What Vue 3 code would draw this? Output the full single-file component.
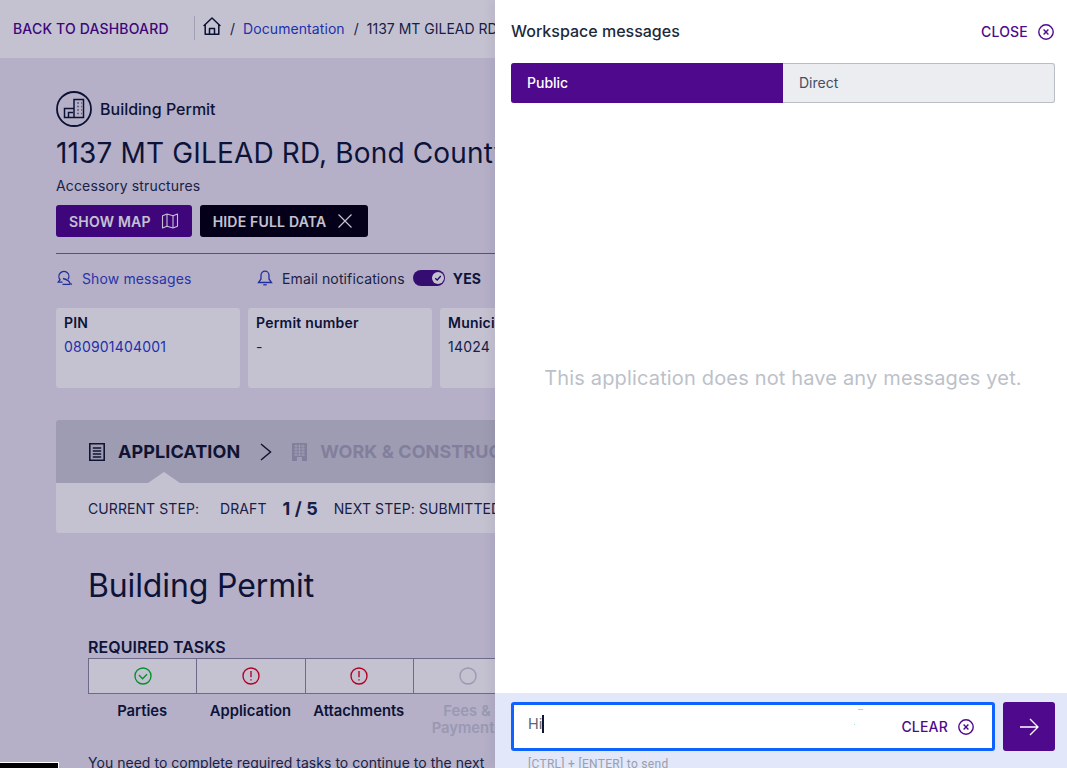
<script setup>
const cards = [
  { label: 'PIN', value: '080901404001', link: true },
  { label: 'Permit number', value: '-', link: false },
  { label: 'Municipality', value: '14024', link: false },
]
const tasks = [
  { name: 'Parties', state: 'ok' },
  { name: 'Application', state: 'err' },
  { name: 'Attachments', state: 'err' },
  { name: 'Fees & Payments', state: 'off' },
]
</script>

<template>
  <div class="page">
    <header class="topbar">
      <span class="back">BACK TO DASHBOARD</span>
      <span class="vsep"></span>
      <svg class="home" viewBox="0 0 18 18" fill="none" stroke="#0c1733" stroke-width="1.5" stroke-linejoin="round">
        <path d="M.6 9 9 1l8.400 8" />
        <path d="M2.200 7.500v9.700h13.600V7.500" />
        <path d="M6.500 17.200v-5.700h5v5.700" />
      </svg>
      <span class="slash">/</span>
      <span class="crumb-link">Documentation</span>
      <span class="slash">/</span>
      <span class="crumb">1137 MT GILEAD RD</span>
    </header>

    <main class="main">
      <div class="kind">
        <svg class="kind-icon" viewBox="0 0 36 36" fill="none" stroke="#0c1733" stroke-width="1.500">
          <circle cx="18" cy="18" r="17" stroke-width="1.800" />
          <path d="M18 17.500V8.500h9.500v18H8.500v-9H18v9" />
          <path d="M12.500 26.500v-5H17" />
          <path d="M21.500 12h1M25 12h.5M21.500 15.500h1M25 15.500h.5M21.500 19h1M25 19h.5M21.500 22.500h1M25 22.500h.5" stroke-width="1.300" />
        </svg>
        <span class="kind-label">Building Permit</span>
      </div>
      <h1 class="address">1137 MT GILEAD RD, Bond County</h1>
      <div class="sub">Accessory structures</div>
      <div class="actions">
        <button class="btn btn-purple">
          SHOW MAP
          <svg class="btn-icon" viewBox="0 0 18 18" fill="none" stroke="currentColor" stroke-width="1.100" stroke-linejoin="round">
            <path d="M1.500 3.800 6 2l6 1.800L16.500 2v12.200L12 16l-6-1.800-4.500 1.800z" />
            <path d="M6 2v12.200M12 3.800V16" />
          </svg>
        </button>
        <button class="btn btn-dark">
          HIDE FULL DATA
          <svg class="btn-icon" viewBox="0 0 18 18" fill="none" stroke="currentColor" stroke-width="1.200">
            <path d="M2.500 2.500l13 13M15.500 2.500l-13 13" />
          </svg>
        </button>
      </div>
      <hr class="rule" />
      <div class="meta">
        <span class="msg-link">
          <svg class="meta-icon" viewBox="0 0 16 16" fill="none" stroke="#2a3fb8" stroke-width="1.300">
            <path d="M3.200 9.800A5 5 0 1 1 11 9.300" />
            <path d="M3.200 9.500 1.200 12.200h4.300" />
            <path d="M6 8.500c2 .4 4 1.200 5.500 2.500.9.800 1.300 1.700 1.500 2.600.5.500 1.200.600 2 .4" />
            <path d="M5.500 14.400h7.500" />
          </svg>
          Show messages
        </span>
        <span class="notif">
          <svg class="meta-icon bell" viewBox="0 0 16 16" fill="none" stroke="#2a3fb8" stroke-width="1.300">
            <path d="M8 1.200a4 4 0 0 0-4 4v3.800L1.500 12.500h13L12 9V5.200a4 4 0 0 0-4-4z" />
            <path d="M6.300 14.800h3.400" />
          </svg>
          Email notifications
        </span>
        <span class="toggle">
          <span class="knob">
            <svg viewBox="0 0 12 12" fill="none" stroke="#34106c" stroke-width="1.400"><path d="M3.200 6.200 5.200 8l3.600-4" /></svg>
          </span>
        </span>
        <span class="yes">YES</span>
      </div>

      <div class="cards">
        <div v-for="c in cards" :key="c.label" class="card">
          <div class="card-label">{{ c.label }}</div>
          <div class="card-value" :class="{ link: c.link }">{{ c.value }}</div>
        </div>
      </div>

      <section class="steps">
        <div class="steps-head">
          <svg class="step-icon" viewBox="0 0 16 18" fill="none" stroke="#141a2e" stroke-width="1.600">
            <path d="M.8.800h14.400v16.400H.8z" />
            <path d="M3.800 5h8.400M3.800 8h8.400M3.800 11h8.400M3.800 14h8.400" stroke-width="1.300" />
          </svg>
          <span class="step-active">APPLICATION</span>
          <svg class="chev" viewBox="0 0 12 18" fill="none" stroke="#141a2e" stroke-width="1.500"><path d="M1 1l9.500 8L1 17" /></svg>
          <svg class="dim" viewBox="0 0 15 18">
            <path d="M0 0h15v18H0z" fill="#a8a7b8" />
            <path d="M2 3h11M2 6h11M2 9h11M2 12h11M4 1.500v11.500M7.500 1.500v11.500M11 1.500v11.500" stroke="#cecdd8" stroke-width=".9" fill="none" />
            <path d="M5 14h5v4H5z" fill="#cecdd8" />
          </svg>
          <span class="step-dim">WORK &amp; CONSTRUCTION</span>
          <span class="notch"></span>
        </div>
        <div class="steps-foot">
          <span>CURRENT STEP:</span>
          <span class="draft">DRAFT</span>
          <span class="count">1 / 5</span>
          <span>NEXT STEP: SUBMITTED</span>
        </div>
      </section>

      <div class="content">
        <h2 class="title">Building Permit</h2>
        <div class="req">REQUIRED TASKS</div>
        <div class="task-row">
          <div v-for="t in tasks" :key="t.name" class="task-cell">
            <svg v-if="t.state === 'ok'" viewBox="0 0 20 20" fill="none" stroke="#00c026" stroke-width="1.500">
              <circle cx="10" cy="10" r="8.900" /><path d="M5.500 9 9.500 13l5-5" />
            </svg>
            <svg v-else-if="t.state === 'err'" viewBox="0 0 20 20" fill="none" stroke="#e8001c" stroke-width="1.500">
              <circle cx="10" cy="10" r="8.900" /><path d="M10 4.500v7M10 13.500v1.500" />
            </svg>
            <svg v-else viewBox="0 0 20 20" fill="none" stroke="#c8c8d7" stroke-width="1.500">
              <circle cx="10" cy="10" r="8.900" />
            </svg>
          </div>
        </div>
        <div class="task-names">
          <div v-for="t in tasks" :key="t.name" class="task-name" :class="{ off: t.state === 'off' }">{{ t.name }}</div>
        </div>
        <p class="note">You need to complete required tasks to continue to the next step of this application process.</p>
      </div>
    </main>

    <div class="corner"></div>
    <div class="overlay"></div>

    <aside class="panel">
      <div class="panel-head">
        <span class="panel-title">Workspace messages</span>
        <span class="action">
          CLOSE
          <svg class="circle-x" viewBox="0 0 16 16" fill="none" stroke="currentColor" stroke-width="1.400">
            <circle cx="8" cy="8" r="7.200" /><path d="M5.600 5.600l4.800 4.800M10.400 5.600l-4.800 4.800" />
          </svg>
        </span>
      </div>
      <div class="tabs">
        <div class="tab active">Public</div>
        <div class="tab">Direct</div>
      </div>
      <div class="empty">This application does not have any messages yet.</div>
      <div class="composer">
        <div class="composer-row">
          <div class="input">
            <span class="typed">Hi</span><span class="caret"></span>
            <span class="speck speck-a"></span>
            <span class="speck speck-b"></span>
            <span class="action clear">
              CLEAR
              <svg class="circle-x" viewBox="0 0 16 16" fill="none" stroke="currentColor" stroke-width="1.400">
                <circle cx="8" cy="8" r="7.200" /><path d="M5.600 5.600l4.800 4.800M10.400 5.600l-4.800 4.800" />
              </svg>
            </span>
          </div>
          <button class="send">
            <svg viewBox="0 0 20 20" fill="none" stroke="#fff" stroke-width="1.300"><path d="M1 10h18M11 2l8 8-8 8" /></svg>
          </button>
        </div>
        <div class="hint">[CTRL] + [ENTER] to send</div>
      </div>
    </aside>
  </div>
</template>

<style>
html, body { margin: 0; height: 100%; overflow: hidden; }
</style>

<style scoped>
.page {
  position: relative;
  width: 1067px;
  height: 768px;
  overflow: hidden;
  background: #ebe8f3;
  font-family: Inter, "Liberation Sans", sans-serif;
  color: #0f1a36;
}
.topbar {
  height: 58px;
  box-sizing: border-box;
  display: flex;
  align-items: center;
  padding: 0 0 2px 13px;
  background: #fff;
  font-size: 14px;
  white-space: nowrap;
}
.back { font-weight: 500; color: #4f098d; width: 181px; letter-spacing: .17px; }
.vsep { width: 1px; height: 24px; background: #d1d3dc; margin-right: 8px; }
.home { width: 18px; height: 18px; margin: 0 9px 4px 0; }
.slash { color: #1d2a4a; margin: 0 8px 0 0; }
.crumb-link { color: #2a3fd0; margin-right: 9px; letter-spacing: .08px; }
.crumb { color: #1d2a4a; }
.main {
  padding: 33px 0 0 56px;
  width: 900px;
  box-sizing: border-box;
}
.kind { display: flex; align-items: center; gap: 8px; height: 36px; }
.kind-icon { width: 36px; height: 36px; }
.kind-label { font-size: 16px; font-weight: 500; }
.address { margin: 8px 0 0; font-size: 28px; font-weight: 400; line-height: 36px; height: 36px; white-space: nowrap; letter-spacing: .15px; }
.sub { margin-top: 6px; font-size: 14px; line-height: 18px; color: #232c48; letter-spacing: .15px; }
.actions { display: flex; gap: 8px; margin-top: 10px; }
.btn {
  height: 32px; border: 0; border-radius: 3px; padding: 0 13px;
  display: flex; align-items: center; gap: 10px;
  font: 600 14px Inter, "Liberation Sans", sans-serif;
  letter-spacing: .2px;
  color: #fff;
}
.btn-purple { background: #4f098d; }
.btn-dark { background: #05000f; padding-right: 14px; }
.btn-icon { width: 18px; height: 18px; }
.rule { border: 0; border-top: 1px solid #6f6f84; margin: 16px 0 0; }
.meta { display: flex; align-items: center; height: 48px; font-size: 14px; white-space: nowrap; letter-spacing: .12px; }
.meta-icon { width: 16px; height: 16px; }
.msg-link { display: flex; align-items: center; gap: 9px; color: #3346c8; margin-left: 1px; width: 200px; }
.notif { display: flex; align-items: center; gap: 9px; color: #232c48; }
.toggle {
  margin-left: 8px; width: 32px; height: 16px; border-radius: 8px; background: #441281;
  display: flex; align-items: center; justify-content: flex-end; padding-right: 1px; box-sizing: border-box;
}
.knob { width: 12px; height: 12px; border-radius: 50%; background: #fff; display: flex; }
.yes { margin-left: 8px; font-weight: 700; }
.cards { display: flex; gap: 8px; margin-top: 6px; }
.card {
  width: 184px; height: 80px; box-sizing: border-box; padding: 7px 8px;
  background: #fff; border-radius: 3px;
}
.card-label { font-size: 14px; font-weight: 600; line-height: 16px; white-space: nowrap; letter-spacing: .22px; }
.card-value { margin-top: 7px; font-size: 14px; letter-spacing: .2px; color: #1d2a4a; }
.card-value.link { color: #2a3fd0; }
.steps { margin-top: 32px; width: 700px; position: relative; }
.steps-head {
  position: relative;
  height: 63px; background: #cecdd8; border-radius: 3px 3px 0 0;
  display: flex; align-items: center; padding: 0 0 0 33px; box-sizing: border-box;
  white-space: nowrap;
}
.step-icon { width: 16px; height: 18px; margin-right: 13px; }
.step-active { font-size: 18px; font-weight: 700; color: #141a2e; letter-spacing: .08px; }
.chev { width: 12px; height: 18px; margin: 0 20px; }
.step-dim { font-size: 18px; font-weight: 700; color: #a8a7b8; letter-spacing: .08px; }
.dim { width: 15px; height: 18px; margin-right: 13px; }
.notch {
  position: absolute; left: 92px; bottom: 0; width: 0; height: 0;
  border-left: 16px solid transparent; border-right: 16px solid transparent;
  border-bottom: 11px solid #fff;
}
.steps-foot {
  height: 50px; background: #fff; border-radius: 0 0 3px 3px;
  display: flex; align-items: center; padding-left: 32px; box-sizing: border-box;
  font-size: 14px; white-space: nowrap; color: #1d2a4a; letter-spacing: .08px;
}
.draft { margin-left: 21px; }
.count { margin: 0 16px; font-size: 18px; font-weight: 700; }
.content { padding-left: 32px; }
.title { margin: 31px 0 0; font-size: 32px; font-weight: 400; line-height: 44px; letter-spacing: -.13px; }
.req { margin-top: 29px; font-size: 16px; font-weight: 600; line-height: 21px; letter-spacing: .06px; }
.task-row { display: flex; width: 650px; border: 1px solid #8f8da2; box-sizing: border-box; height: 36px; background: #fff; }
.task-cell { width: 108.300px; flex: none; display: flex; align-items: center; justify-content: center; border-right: 1px solid #8f8da2; box-sizing: border-box; }
.task-cell svg { width: 18px; height: 18px; }
.task-names { display: flex; margin-top: 9px; }
.task-name { width: 108.300px; flex: none; text-align: center; font-size: 14.800px; font-weight: 600; line-height: 17px; padding: 0 8px; box-sizing: border-box; }
.task-name.off { color: #c8c8d7; padding: 0 16px; }
.note { margin: 16px 0 0; width: 405px; font-size: 14px; line-height: 20px; color: #232c48; letter-spacing: .03px; }
.corner {
  position: absolute; left: 0; bottom: 0; width: 58px; height: 5px;
  background: #000; border-top: 1px solid #fff; border-right: 1px solid #fff; z-index: 3;
}
.overlay { position: absolute; inset: 0; background: rgba(9, 0, 63, .24); }
.panel {
  position: absolute; top: 0; right: 0; bottom: 0; width: 572px;
  background: #fff; display: flex; flex-direction: column;
  box-shadow: -4px 0 10px rgba(20, 10, 50, .06);
}
.panel-head {
  display: flex; align-items: center; justify-content: space-between;
  padding: 0 13px 0 16px; height: 63px;
}
.panel-title { font-size: 16px; font-weight: 500; color: #1b2a3c; margin-bottom: 1px; }
.action { display: flex; align-items: center; gap: 10px; font-size: 14px; font-weight: 500; color: #4f098d; letter-spacing: .2px; }
.circle-x { width: 16px; height: 16px; }
.tabs {
  display: flex; margin: 0 12px 0 16px; height: 40px; border-radius: 3px;
  overflow: hidden; background: #ebedf0; box-sizing: border-box;
  box-shadow: inset 0 0 0 1px #b9bdc6;
}
.tab { flex: 1; display: flex; align-items: center; padding: 0 0 1px 16px; font-size: 14px; color: #434f64; }
.tab.active { background: #4f098d; color: #fff; font-weight: 500; }
.empty {
  flex: 1; display: flex; align-items: center; justify-content: center;
  font-size: 20px; color: #bcc1c9; padding: 0 0 40px 4px; letter-spacing: .16px;
}
.composer { height: 75px; background: #e2e7fa; padding: 9px 12px 0 16px; box-sizing: border-box; overflow: hidden; }
.composer-row { display: flex; gap: 8px; }
.input {
  position: relative;
  flex: 1; height: 49px; box-sizing: border-box; background: #fff;
  border: 3px solid #0f62fe; border-radius: 3px;
  display: flex; align-items: center; padding: 0 18px 0 14px;
}
.typed { font-family: Roboto, sans-serif; font-size: 15px; color: #5e6875; margin-bottom: 5px; }
.caret { width: 2px; height: 18px; background: #0c1733; margin-bottom: 5px; }
.clear { margin-left: auto; }
.speck { position: absolute; background: #8fe6d8; }
.speck-a { left: 344px; top: 4px; width: 5px; height: 1px; }
.speck-b { left: 340px; top: 19px; width: 1px; height: 1px; }
.send {
  width: 52px; height: 49px; border: 0; border-radius: 3px; background: #4f098d;
  display: flex; align-items: center; justify-content: center; padding: 0;
}
.send svg { width: 20px; height: 20px; }
.hint { margin: 6px 0 0 17px; font-family: Roboto, sans-serif; font-size: 12px; line-height: 14px; letter-spacing: .3px; color: #98a0ac; }
</style>
